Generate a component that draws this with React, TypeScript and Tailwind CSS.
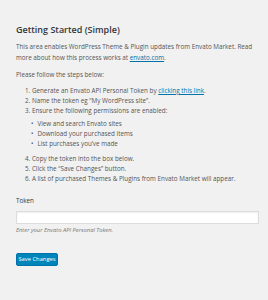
export default function App() {
  return (
    <div className="w-[268px] h-[300px] bg-[#f1f1f1] text-[#555] overflow-hidden" style={{ fontFamily: '"Open Sans", "Noto Sans", sans-serif' }}>
      <div className="pl-[16px] pr-[9px] pt-[24px]">
        <h2 className="text-[9px] leading-[12px] font-semibold text-[#32373c]">Getting Started (Simple)</h2>
        <p className="mt-[6px] text-[6.3px] leading-[10.5px]">
          This area enables WordPress Theme &amp; Plugin updates from Envato Market. Read more about how this process works at{' '}
          <a className="text-[#0073aa] underline">envato.com</a>.
        </p>
        <p className="mt-[7px] text-[6.3px] leading-[10px]">Please follow the steps below:</p>
        <ol className="mt-[6px] text-[6.3px] leading-[10px] pl-[9px]">
          <li>1. Generate an Envato API Personal Token by <a className="text-[#0073aa] underline">clicking this link</a>.</li>
          <li>2. Name the token eg “My WordPress site”.</li>
          <li>3. Ensure the following permissions are enabled:</li>
          <li>
            <ul className="pl-[6px] mt-[3px] mb-[5px]">
              <li className="flex gap-[4px]"><span>•</span><span>View and search Envato sites</span></li>
              <li className="flex gap-[4px]"><span>•</span><span>Download your purchased items</span></li>
              <li className="flex gap-[4px]"><span>•</span><span>List purchases you’ve made</span></li>
            </ul>
          </li>
          <li>4. Copy the token into the box below.</li>
          <li>5. Click the “Save Changes” button.</li>
          <li>6. A list of purchased Themes &amp; Plugins from Envato Market will appear.</li>
        </ol>
        <div className="mt-[12px] text-[6.3px] leading-[10px] font-medium text-[#32373c]">Token</div>
        <input className="mt-[5px] block w-[243px] h-[13px] bg-white border border-[#ddd] shadow-[inset_0_1px_2px_rgba(0,0,0,0.07)]" />
        <div className="mt-[1px] text-[5.8px] leading-[10px] italic text-[#777]">Enter your Envato API Personal Token.</div>
        <button className="mt-[18px] block h-[13px] w-[42px] bg-[#0085ba] border border-[#0073aa] rounded-[2px] text-white text-[5.8px] leading-[11px] text-center">Save Changes</button>
      </div>
    </div>
  );
}
